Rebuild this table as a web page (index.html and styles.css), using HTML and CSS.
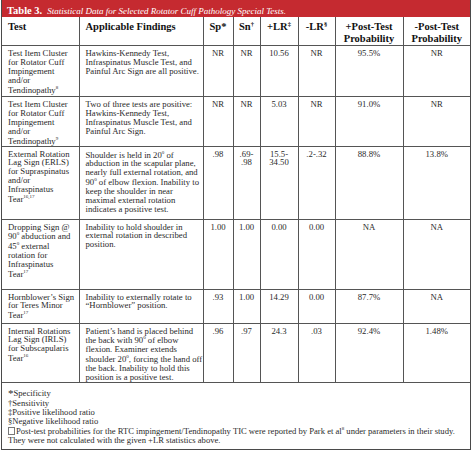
FILE: index.html
```html
<!DOCTYPE html>
<html>
<head>
<meta charset="utf-8">
<link rel="stylesheet" href="styles.css">
</head>
<body>
<div class="frame">
  <div class="caption"><span class="cap-num">Table 3.</span> <span class="cap-title">Statistical Data for Selected Rotator Cuff Pathology Special Tests.</span></div>
  <table class="data">
    <colgroup>
      <col class="c1"><col class="c2"><col class="c3"><col class="c4"><col class="c5"><col class="c6"><col class="c7"><col class="c8">
    </colgroup>
    <thead>
      <tr class="hr">
        <th class="left">Test</th>
        <th class="left">Applicable Findings</th>
        <th>Sp*</th>
        <th>Sn<sup>†</sup></th>
        <th>+LR<sup>‡</sup></th>
        <th>-LR<sup>§</sup></th>
        <th>+Post-Test<br>Probability</th>
        <th>-Post-Test<br>Probability</th>
      </tr>
    </thead>
    <tbody>
      <tr class="r1">
        <td class="left">Test Item Cluster<br>for Rotator Cuff<br>Impingement<br>and/or<br>Tendinopathy<sup>8</sup></td>
        <td class="left">Hawkins-Kennedy Test,<br>Infraspinatus Muscle Test, and<br>Painful Arc Sign are all positive.</td>
        <td>NR</td><td>NR</td><td>10.56</td><td>NR</td><td>95.5%</td><td>NR</td>
      </tr>
      <tr class="r2">
        <td class="left">Test Item Cluster<br>for Rotator Cuff<br>Impingement<br>and/or<br>Tendinopathy<sup>9</sup></td>
        <td class="left">Two of three tests are positive:<br>Hawkins-Kennedy Test,<br>Infraspinatus Muscle Test, and<br>Painful Arc Sign.</td>
        <td>NR</td><td>NR</td><td>5.03</td><td>NR</td><td>91.0%</td><td>NR</td>
      </tr>
      <tr class="r3">
        <td class="left">External Rotation<br>Lag Sign (ERLS)<br>for Supraspinatus<br>and/or<br>Infraspinatus<br>Tear<sup>16,17</sup></td>
        <td class="left">Shoulder is held in 20<sup>0</sup> of<br>abduction in the scapular plane,<br>nearly full external rotation, and<br>90<sup>0</sup> of elbow flexion. Inability to<br>keep the shoulder in near<br>maximal external rotation<br>indicates a positive test.</td>
        <td>.98</td><td>.69-<br>.98</td><td>15.5-<br>34.50</td><td>.2-.32</td><td>88.8%</td><td>13.8%</td>
      </tr>
      <tr class="r4">
        <td class="left">Dropping Sign @<br>90<sup>0</sup> abduction and<br>45<sup>0</sup> external<br>rotation for<br>Infraspinatus<br>Tear<sup>17</sup></td>
        <td class="left">Inability to hold shoulder in<br>external rotation in described<br>position.</td>
        <td>1.00</td><td>1.00</td><td>0.00</td><td>0.00</td><td>NA</td><td>NA</td>
      </tr>
      <tr class="r5">
        <td class="left">Hornblower’s Sign<br>for Teres Minor<br>Tear<sup>17</sup></td>
        <td class="left">Inability to externally rotate to<br>“Hornblower” position.</td>
        <td>.93</td><td>1.00</td><td>14.29</td><td>0.00</td><td>87.7%</td><td>NA</td>
      </tr>
      <tr class="r6">
        <td class="left">Internal Rotations<br>Lag Sign (IRLS)<br>for Subscapularis<br>Tear<sup>16</sup></td>
        <td class="left">Patient’s hand is placed behind<br>the back with 90<sup>0</sup> of elbow<br>flexion. Examiner extends<br>shoulder 20<sup>0</sup>, forcing the hand off<br>the back. Inability to hold this<br>position is a positive test.</td>
        <td>.96</td><td>.97</td><td>24.3</td><td>.03</td><td>92.4%</td><td>1.48%</td>
      </tr>
    </tbody>
  </table>
  <div class="notes">
    <p class="note first"><span class="star">*</span>Specificity</p>
    <p class="note">†Sensitivity</p>
    <p class="note">‡Positive likelihood ratio</p>
    <p class="note">§Negative likelihood ratio</p>
    <p class="note"><span class="box"></span>Post-test probabilities for the RTC impingement/Tendinopathy TIC were reported by Park et al<sup>8</sup> under parameters in their study.</p>
    <p class="note">They were not calculated with the given +LR statistics above.</p>
  </div>
</div>
</body>
</html>
```

FILE: styles.css
```css
html, body {
  margin: 0;
  padding: 0;
  background: #ffffff;
}

body {
  font-family: "Liberation Serif", "Times New Roman", serif;
  color: #2a2a2a;
}

.frame {
  margin-left: 1px;
  width: 468px;
  border: 1px solid #4a4a4a;
  border-top: none;
}

.caption {
  background: #c52a30;
  color: #ffffff;
  height: 17px;
  line-height: 17px;
  padding-left: 5px;
  white-space: nowrap;
  overflow: hidden;
}

.cap-num {
  font-weight: bold;
  font-size: 10.5px;
}

.cap-title {
  font-style: italic;
  font-size: 9px;
  margin-left: 1px;
}

.data {
  width: 468px;
  table-layout: fixed;
  border-collapse: collapse;
  font-size: 8.7px;
  line-height: 8.9px;
}

.c1 { width: 77px; }
.c2 { width: 124px; }
.c3 { width: 30px; }
.c4 { width: 27px; }
.c5 { width: 38px; }
.c6 { width: 37px; }
.c7 { width: 68px; }
.c8 { width: 67px; }

.data th,
.data td {
  border: 1px solid #555555;
  vertical-align: top;
  text-align: center;
  padding: 3px 1px 0 1px;
  overflow: hidden;
  white-space: nowrap;
}

.data tr > :first-child { border-left: none; }
.data tr > :last-child { border-right: none; }
.data thead th { border-top: none; }

.data th {
  font-size: 10.5px;
  line-height: 12px;
  font-weight: bold;
  color: #111111;
  padding-top: 4px;
}

.data .left {
  text-align: left;
  padding-left: 6px;
  padding-right: 1px;
}

.hr { height: 27px; }
.r1 { height: 51px; }
.r2 { height: 47px; }
.r3 { height: 73px; }
.r4 { height: 70px; }
.r5 { height: 34px; }
.r6 { height: 55px; }

sup {
  font-size: 5px;
  line-height: 5px;
  vertical-align: 4px;
}

.data th sup {
  font-size: 6.5px;
  line-height: 0;
  vertical-align: 4px;
}

.notes {
  padding: 5px 6px 4px 6px;
  font-size: 8.6px;
  line-height: 9px;
}

.note {
  margin: 0;
  white-space: nowrap;
}

.note.first {
  line-height: 11px;
}

.star {
  font-size: 11px;
  vertical-align: -1px;
  line-height: 0;
}

.box {
  display: inline-block;
  width: 5px;
  height: 6px;
  border: 0.6px solid #777777;
  margin-right: 1px;
  vertical-align: -1px;
}
```
